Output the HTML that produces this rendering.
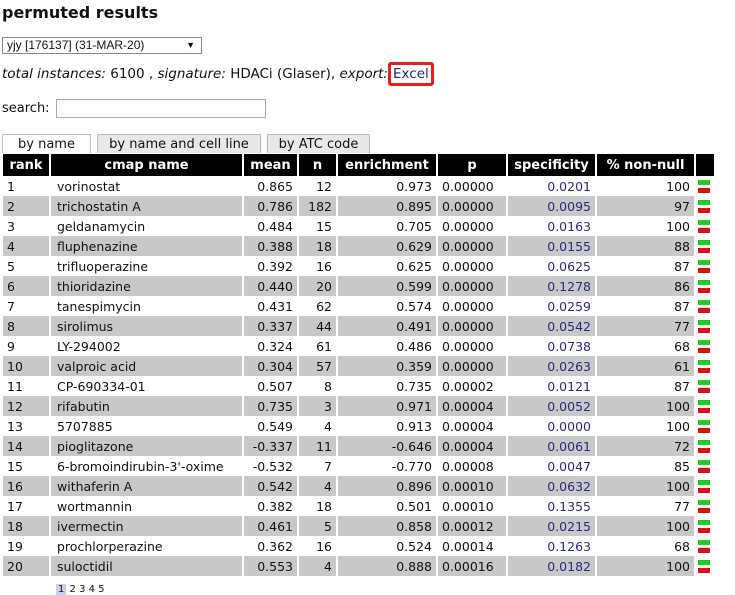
<!DOCTYPE html><html><head><meta charset="utf-8"><style>
body{margin:0;background:#fff;font-family:"DejaVu Sans","Liberation Sans",sans-serif;color:#111;width:735px;height:590px;overflow:hidden;position:relative}
h1{position:absolute;left:2px;top:3px;margin:0;font-size:16px;font-weight:bold}
.sel{position:absolute;left:2px;top:37px;width:194px;height:15px;border:1px solid #888;font-size:12px;font-family:"Liberation Sans",sans-serif;line-height:15px;padding-left:4px;box-sizing:content-box}
.sel span{position:absolute;right:6px;top:0;font-size:9px}
.info{position:absolute;left:2px;top:66px;font-size:13.5px}
.info i{font-style:italic}
.xl{border:3px solid #e02020;border-radius:3px;padding:1px 2px;color:#222277}
.search{position:absolute;left:2px;top:101px;font-size:13px}
.search .box{position:absolute;left:54px;top:-2px;width:208px;height:17px;border:1px solid #aaa}
.tab{position:absolute;top:134px;height:18px;border:1px solid #bbb;border-bottom:none;font-size:13px;text-align:center;line-height:19px;background:#e8e8e8}
table{position:absolute;left:1px;top:154px;border-collapse:separate;border-spacing:2px 0;font-size:12.5px}
th{background:#000;color:#fff;height:22px;padding:0;font-size:13px}
td{height:20px;padding:0 4px;white-space:nowrap}
tr.g td{background:#c8c8c8}
td.r{text-align:right}
td.b{color:#2a2a80}
td.ic{background:#fff!important;padding:0 0 0 2px}
.ic div{width:12px;height:5px}
</style></head><body>
<h1>permuted results</h1>
<div class="sel">yjy [176137] (31-MAR-20)<span>▼</span></div>
<div class="info"><i>total instances:</i> 6100 , <i>signature:</i> HDACi (Glaser), <i>export:</i><span class="xl">Excel</span></div>
<div class="search">search:<div class="box"></div></div>
<div class="tab" style="left:2px;width:87px;background:#fff">by name</div>
<div class="tab" style="left:97px;width:162px">by name and cell line</div>
<div class="tab" style="left:267px;width:101px">by ATC code</div>
<table>
<tr><th style="width:46px">rank</th><th style="width:191px">cmap name</th><th style="width:53px">mean</th><th style="width:37px">n</th><th style="width:98px">enrichment</th><th style="width:68px">p</th><th style="width:87px">specificity</th><th style="width:97px">% non-null</th><th style="width:18px"></th></tr>
<tbody id="tb"></tbody>
</table>
<script>
var d=[["vorinostat","0.865","12","0.973","0.00000","0.0201","100"],["trichostatin A","0.786","182","0.895","0.00000","0.0095","97"],["geldanamycin","0.484","15","0.705","0.00000","0.0163","100"],["fluphenazine","0.388","18","0.629","0.00000","0.0155","88"],["trifluoperazine","0.392","16","0.625","0.00000","0.0625","87"],["thioridazine","0.440","20","0.599","0.00000","0.1278","86"],["tanespimycin","0.431","62","0.574","0.00000","0.0259","87"],["sirolimus","0.337","44","0.491","0.00000","0.0542","77"],["LY-294002","0.324","61","0.486","0.00000","0.0738","68"],["valproic acid","0.304","57","0.359","0.00000","0.0263","61"],["CP-690334-01","0.507","8","0.735","0.00002","0.0121","87"],["rifabutin","0.735","3","0.971","0.00004","0.0052","100"],["5707885","0.549","4","0.913","0.00004","0.0000","100"],["pioglitazone","-0.337","11","-0.646","0.00004","0.0061","72"],["6-bromoindirubin-3'-oxime","-0.532","7","-0.770","0.00008","0.0047","85"],["withaferin A","0.542","4","0.896","0.00010","0.0632","100"],["wortmannin","0.382","18","0.501","0.00010","0.1355","77"],["ivermectin","0.461","5","0.858","0.00012","0.0215","100"],["prochlorperazine","0.362","16","0.524","0.00014","0.1263","68"],["suloctidil","0.553","4","0.888","0.00016","0.0182","100"]];
var h="";d.forEach(function(r,i){h+='<tr class="'+(i%2?'g':'')+'"><td>'+(i+1)+'</td><td style="padding-left:6px">'+r[0]+'</td><td class="r">'+r[1]+'</td><td class="r">'+r[2]+'</td><td class="r">'+r[3]+'</td><td>'+r[4]+'</td><td class="r b">'+r[5]+'</td><td class="r">'+r[6]+'</td><td class="ic"><div style="background:#22cc22"></div><div style="height:3px"></div><div style="background:#dd1111"></div></td></tr>'});
document.getElementById("tb").innerHTML=h;
</script>
<div style="position:absolute;left:56px;top:584px;font-size:10px"><span style="background:#cce;padding:0 2px">1</span> 2 3 4 5</div>
</body></html>
